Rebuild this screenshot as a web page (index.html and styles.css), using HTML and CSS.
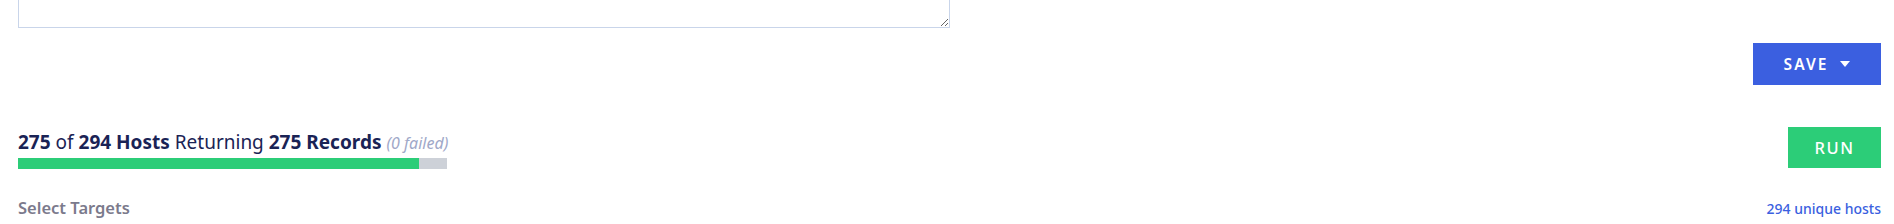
FILE: index.html
```html
<!DOCTYPE html>
<html lang="en">
<head>
    <meta charset="UTF-8">
    <title>Query Runner</title>
    <link rel="stylesheet" href="styles.css">
</head>
<body>
    <div class="page">
        <textarea class="query-input"></textarea>

        <div class="save-row">
            <button class="btn btn-save">SAVE <span class="caret"></span></button>
        </div>

        <div class="run-row">
            <div class="progress">
                <div class="progress-text">
                    <b>275</b> of <b>294 Hosts</b> Returning <b>275 Records</b> <em>(0 failed)</em>
                </div>
                <div class="progress-bar">
                    <div class="progress-fill" style="width: 93.5%"></div>
                </div>
            </div>
            <button class="btn btn-run">RUN</button>
        </div>

        <div class="targets-row">
            <span class="targets-label">Select Targets</span>
            <a class="hosts-link" href="#">294 unique hosts</a>
        </div>
    </div>
</body>
</html>
```

FILE: styles.css
```css
body {
    margin: 0;
    font-family: "Noto Sans", "Open Sans", sans-serif;
    background: #fff;
    color: #1a2355;
    overflow: hidden;
}
.page {
    padding: 0 13px 0 18px;
}
.query-input {
    display: block;
    width: 932px;
    height: 68px;
    margin-top: -40px;
    box-sizing: border-box;
    border: 1px solid #c9d5ea;
    resize: both;
}
.save-row {
    display: flex;
    justify-content: flex-end;
    margin-top: 15px;
}
.btn {
    border: none;
    color: #fff;
    font-family: inherit;
    cursor: pointer;
}
.btn-save {
    width: 128px;
    height: 42px;
    background: #3b5fe0;
    font-size: 15.5px;
    font-weight: 600;
    letter-spacing: 2px;
    display: flex;
    align-items: center;
    justify-content: center;
    gap: 12px;
}
.caret {
    width: 0;
    height: 0;
    border-left: 5px solid transparent;
    border-right: 5px solid transparent;
    border-top: 6px solid #fff;
}
.run-row {
    display: flex;
    justify-content: space-between;
    align-items: flex-end;
    margin-top: 42px;
}
.progress {
    width: 429px;
}
.progress-text {
    font-size: 19px;
    line-height: 24px;
    white-space: nowrap;
    margin-bottom: 3px;
}
.progress-text b {
    font-weight: 700;
}
.progress-text em {
    font-size: 16px;
    color: #a0a8c8;
}
.progress-bar {
    height: 11px;
    background: #cdd1d8;
}
.progress-fill {
    height: 100%;
    background: #2ccd78;
}
.btn-run {
    width: 93px;
    height: 41px;
    background: #2ccd78;
    font-size: 16.5px;
    font-weight: 500;
    letter-spacing: 1.5px;
    margin-bottom: 1px;
}
.targets-row {
    display: flex;
    justify-content: space-between;
    align-items: baseline;
    margin-top: 27px;
}
.targets-label {
    font-size: 16.5px;
    font-weight: 600;
    color: #7b7a8c;
}
.hosts-link {
    font-size: 14px;
    font-weight: 500;
    color: #3b5fe0;
    text-decoration: none;
}
```
